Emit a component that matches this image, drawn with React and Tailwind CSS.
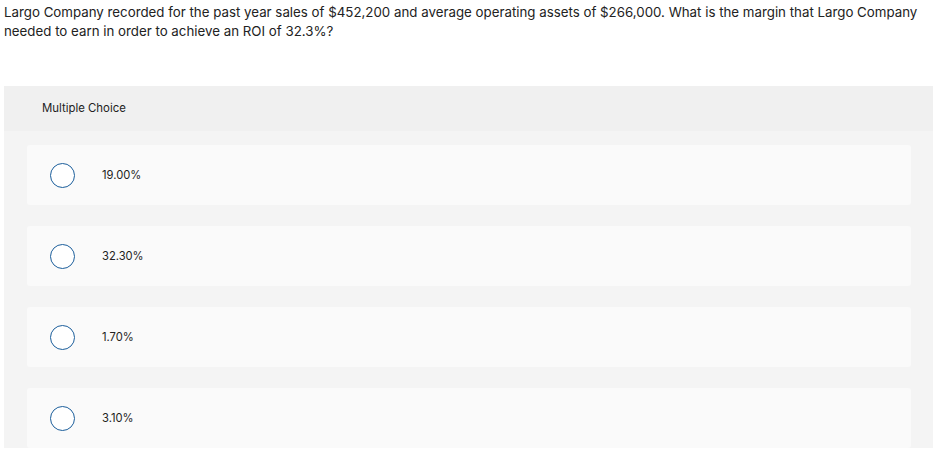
import React from "react";

const options = ["19.00%", "32.30%", "1.70%", "3.10%"];

export default function App() {
  return (
    <div className="w-[933px] h-[449px] overflow-hidden bg-white font-['Inter',sans-serif] text-[#222]">
      <p className="pl-[4px] pt-[3px] pr-[8px] text-[13.3px] leading-[19px]">
        Largo Company recorded for the past year sales of $452,200 and average operating assets of $266,000. What is the margin that Largo Company needed to earn in order to achieve an ROI of 32.3%?
      </p>
      <div className="ml-[4px] mt-[45px] bg-[#f4f4f4]">
        <div className="h-[45px] bg-[#f0f0f0] pl-[38px] flex items-center text-[11.4px] text-[#222]">
          Multiple Choice
        </div>
        <div className="pl-[23px] pr-[22px] pt-[14px] flex flex-col gap-[21px]">
          {options.map((o) => (
            <div key={o} className="h-[60px] rounded-[3px] bg-[#fafafa] flex items-center pl-[23px]">
              <span className="w-[25px] h-[25px] rounded-full border-[1.5px] border-[#1b5e9b] bg-white shrink-0" />
              <span className="ml-[27px] text-[11.2px] text-[#222]">{o}</span>
            </div>
          ))}
        </div>
      </div>
    </div>
  );
}
